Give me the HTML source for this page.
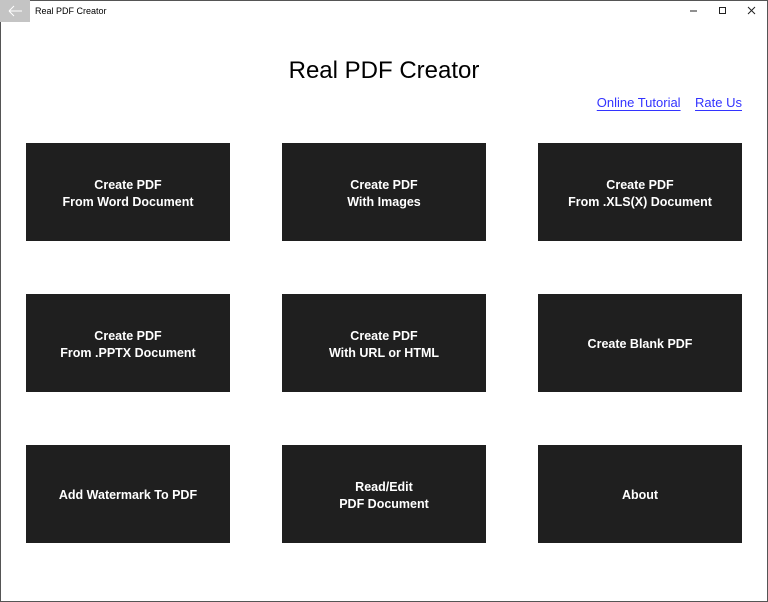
<!DOCTYPE html>
<html><head><style>
body{margin:0;width:768px;height:602px;overflow:hidden;font-family:"Liberation Sans",sans-serif;background:#fff}
.win{position:absolute;left:0;top:0;width:766px;height:600px;border:1px solid #555;background:#fff}
.back{position:absolute;left:0;top:0;width:30px;height:22px;background:#c4c4c4}
.ttl{position:absolute;left:35px;top:6px;font-size:9px;color:#000}
h1{position:absolute;left:0;width:768px;top:57px;margin:0;text-align:center;font-weight:normal;font-size:24px;color:#000}
.lnks{position:absolute;right:26px;top:95px;font-size:13px;color:#3333ff}
.lnks span{text-decoration:underline;text-underline-offset:3px}
.b{position:absolute;width:204px;height:98px;padding-top:3px;box-sizing:border-box;background:#1f1f1f;color:#fff;font-weight:bold;font-size:12.5px;display:flex;align-items:center;justify-content:center;text-align:center;line-height:17px}
</style></head><body>
<div class="win"></div>
<div class="back"><svg width="30" height="22"><path d="M9 11H22M9 11L14 6M9 11L14 16" stroke="#fff" stroke-width="1" fill="none"/></svg></div>
<div class="ttl">Real PDF Creator</div>
<svg style="position:absolute;left:680px;top:4px" width="80" height="14"><path d="M10 7H17" stroke="#222"/><rect x="39.5" y="3.5" width="6" height="6" fill="none" stroke="#222"/><path d="M68 3L75 10M75 3L68 10" stroke="#222"/></svg>
<h1>Real PDF Creator</h1>
<div class="lnks"><span>Online Tutorial</span>&nbsp;&nbsp;&nbsp;&nbsp;<span>Rate Us</span></div>
<div class="b" style="left:26px;top:143px">Create PDF<br>From Word Document</div>
<div class="b" style="left:282px;top:143px">Create PDF<br>With Images</div>
<div class="b" style="left:538px;top:143px">Create PDF<br>From .XLS(X) Document</div>
<div class="b" style="left:26px;top:294px">Create PDF<br>From .PPTX Document</div>
<div class="b" style="left:282px;top:294px">Create PDF<br>With URL or HTML</div>
<div class="b" style="left:538px;top:294px">Create Blank PDF</div>
<div class="b" style="left:26px;top:445px">Add Watermark To PDF</div>
<div class="b" style="left:282px;top:445px">Read/Edit<br>PDF Document</div>
<div class="b" style="left:538px;top:445px">About</div>
</body></html>
